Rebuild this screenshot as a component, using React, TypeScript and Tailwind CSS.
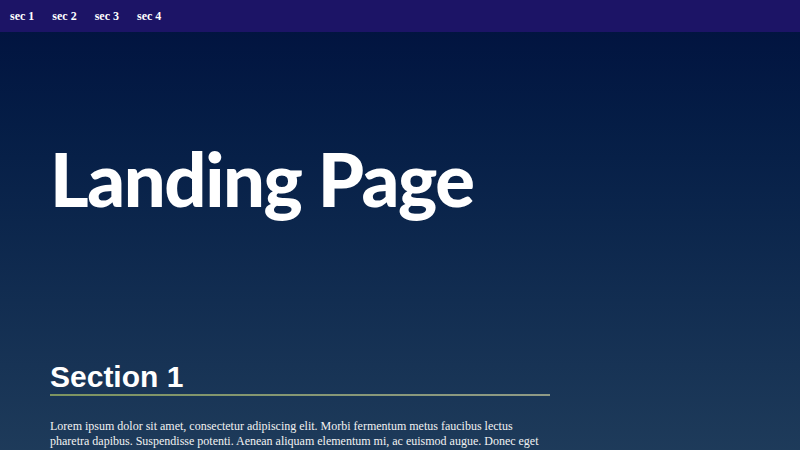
export default function App() {
  const navItems = ["sec 1", "sec 2", "sec 3", "sec 4"];

  return (
    <div className="min-h-screen w-full bg-gradient-to-b from-[#01113e] to-[#1f3c5b] text-white">
      {/* Top navigation */}
      <nav className="h-8 w-full bg-[#1c1466] flex items-center pl-[10px] gap-[18px]">
        {navItems.map((item) => (
          <a
            key={item}
            href="#"
            className="text-[12px] font-bold text-white font-['Liberation_Serif',serif]"
          >
            {item}
          </a>
        ))}
      </nav>

      {/* Hero */}
      <header className="pl-[50px] pt-[110px] h-[329px]">
        <h1 className="text-[74px] leading-none font-black tracking-[-1.4px] font-['Lato','Open_Sans',sans-serif]">
          Landing Page
        </h1>
      </header>

      {/* Section 1 */}
      <section className="pl-[50px] w-[550px]">
        <h2 className="text-[30px] font-bold leading-[32px] font-['Liberation_Sans',Arial,sans-serif] pb-[1px]">
          Section 1
        </h2>
        <div className="h-[2px] w-full bg-gradient-to-r from-[#7d9460] to-[#8f9a86]" />
        <p className="mt-[23px] text-[12px] leading-[15px] font-['Liberation_Serif',serif] text-[#f2f2f2]">
          Lorem ipsum dolor sit amet, consectetur adipiscing elit. Morbi fermentum metus faucibus lectus
          pharetra dapibus. Suspendisse potenti. Aenean aliquam elementum mi, ac euismod augue. Donec eget
          lacinia ex. Phasellus imperdiet porta orci eget mollis. Sed convallis sollicitudin mauris ac tincidunt.
        </p>
      </section>
    </div>
  );
}
